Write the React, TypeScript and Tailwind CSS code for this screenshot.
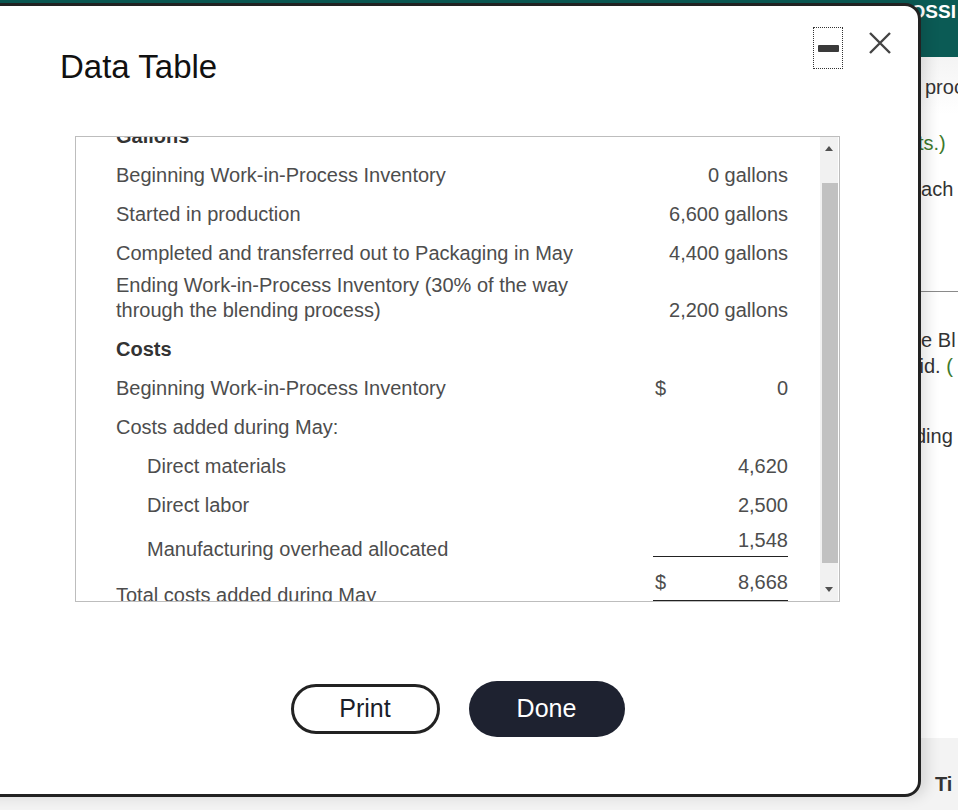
import React from 'react';

const font = { fontFamily: '"Liberation Sans", Arial, sans-serif' };

function Val({ children, dollar }: { children: React.ReactNode; dollar?: boolean }) {
  return (
    <div className="w-[135px] flex justify-between">
      <span className="pl-[2px]">{dollar ? '$' : ''}</span>
      <span>{children}</span>
    </div>
  );
}

export default function App() {
  return (
    <div className="relative w-[958px] h-[810px] overflow-hidden bg-white" style={font}>
      {/* page behind the dialog */}
      <div className="h-[57px] bg-[#0b5b55] flex justify-end items-start">
        <span className="text-white font-bold text-[19px] leading-[20px] pr-[2px] pt-[2px]">OSSI</span>
      </div>
      <div className="flex flex-col text-[20px] leading-[25px] text-[#333] pl-[905px]">
        <div className="h-[57px] bg-gradient-to-b from-[#f4f4f4] to-white" />
        <p className="mt-[-39px] pl-[20px]">process</p>
        <p className="mt-[31px] pl-[13px] text-[#3d7a2c]">ts.)</p>
        <p className="mt-[21px] pl-[5px]">each</p>
        <div className="mt-[89px] h-px bg-[#8a8a8a]" />
        <p className="mt-[36px] pl-[5px]">he Bl</p>
        <p className="mt-[1px] pl-[10px]">iid. <span className="text-[#3d7a2c]">(</span></p>
        <p className="mt-[45px] pl-[10px]">ding</p>
      </div>
      <div className="absolute left-0 right-0 bottom-0 h-[72px] bg-[#f3f3f3] flex items-end pl-[935px] pb-[11px]">
        <span className="font-bold text-[20px] text-[#333]">Ti</span>
      </div>

      {/* dialog */}
      <div className="absolute left-[-20px] top-[3px] w-[941px] h-[794px] bg-white border-[3px] border-[#222] rounded-r-[16px] shadow-[6px_0_14px_rgba(0,0,0,0.12)] flex flex-col">
        <div className="flex justify-between items-start pt-[21px] pl-[77px] pr-[25px]">
          <h1 className="mt-[22px] text-[33px] leading-[36px] text-[#111]">Data Table</h1>
          <div className="flex items-start gap-[24px]">
            <button className="w-[30px] h-[42px] border border-dotted border-[#333] flex items-center justify-center">
              <span className="block w-[21px] h-[7px] rounded-[1px] bg-[#3a3a3a]" />
            </button>
            <button className="mt-[3px] w-[26px] h-[26px] flex items-center justify-center">
              <svg width="24" height="24" viewBox="0 0 24 24" fill="none" stroke="#444" strokeWidth="2.4" strokeLinecap="butt">
                <path d="M2 2 L22 22 M22 2 L2 22" />
              </svg>
            </button>
          </div>
        </div>

        <div className="ml-[92px] mt-[51px] w-[765px] h-[466px] border border-[#bdbdbd] flex overflow-hidden">
          <div className="flex-1 overflow-hidden text-[20px] leading-[25px] text-[#4d4d4d]">
            <div className="-mt-[20px] flex flex-col pr-[32px]">
              <div className="h-[39px] flex items-center pl-[40px] font-bold text-[#333]">Gallons</div>
              <div className="h-[39px] flex items-center justify-between pl-[40px]">
                <span>Beginning Work-in-Process Inventory</span>
                <span>0 gallons</span>
              </div>
              <div className="h-[39px] flex items-center justify-between pl-[40px]">
                <span>Started in production</span>
                <span>6,600 gallons</span>
              </div>
              <div className="h-[39px] flex items-center justify-between pl-[40px]">
                <span>Completed and transferred out to Packaging in May</span>
                <span>4,400 gallons</span>
              </div>
              <div className="h-[57px] flex items-start justify-between pl-[40px]">
                <span>Ending Work-in-Process Inventory (30% of the way<br />through the blending process)</span>
                <span className="pt-[25px]">2,200 gallons</span>
              </div>
              <div className="h-[39px] flex items-center pl-[40px] font-bold text-[#333]">Costs</div>
              <div className="h-[39px] flex items-center justify-between pl-[40px]">
                <span>Beginning Work-in-Process Inventory</span>
                <Val dollar>0</Val>
              </div>
              <div className="h-[39px] flex items-center pl-[40px]">Costs added during May:</div>
              <div className="h-[39px] flex items-center justify-between pl-[71px]">
                <span>Direct materials</span>
                <Val>4,620</Val>
              </div>
              <div className="h-[39px] flex items-center justify-between pl-[71px]">
                <span>Direct labor</span>
                <Val>2,500</Val>
              </div>
              <div className="h-[38px] flex items-start justify-between pl-[71px]">
                <span className="pt-[12px]">Manufacturing overhead allocated</span>
                <div className="pt-[3px] pb-[3px] border-b border-[#222]">
                  <Val>1,548</Val>
                </div>
              </div>
              <div className="h-[50px] flex items-start justify-between pl-[40px]">
                <span className="pt-[20px]">Total costs added during May</span>
                <div className="pt-[7px] pb-[5px] border-b border-[#222]">
                  <Val dollar>8,668</Val>
                </div>
              </div>
            </div>
          </div>
          {/* scrollbar */}
          <div className="w-[18px] mr-px bg-[#f1f1f1] flex flex-col">
            <div className="h-[46px] flex justify-center pt-[9px]">
              <svg width="8" height="5" viewBox="0 0 8 5"><path d="M0 5 L4 0 L8 5 Z" fill="#505050" /></svg>
            </div>
            <div className="h-[380px] bg-[#c1c1c1] ml-[2px]" />
            <div className="flex-1 flex justify-center items-end pb-[9px]">
              <svg width="8" height="5" viewBox="0 0 8 5"><path d="M0 0 L8 0 L4 5 Z" fill="#505050" /></svg>
            </div>
          </div>
        </div>

        <div className="ml-[92px] w-[765px] mt-[79px] flex justify-center items-center gap-[29px]">
          <button className="w-[149px] h-[50px] rounded-full border-[3px] border-[#222] text-[25px] text-[#1a1e2a] bg-white">Print</button>
          <button className="w-[156px] h-[56px] rounded-full bg-[#1e2230] text-[25px] text-white">Done</button>
        </div>
      </div>
    </div>
  );
}
